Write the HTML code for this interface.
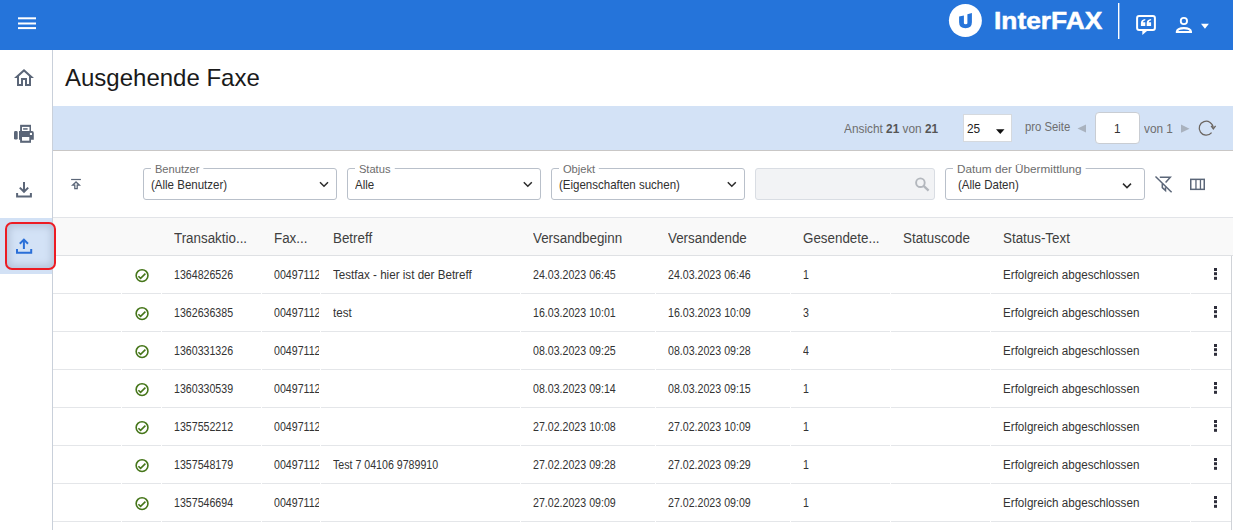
<!DOCTYPE html>
<html><head><meta charset="utf-8">
<style>
*{margin:0;padding:0;box-sizing:border-box}
html,body{width:1233px;height:530px;overflow:hidden;background:#fff;font-family:"Liberation Sans",sans-serif;color:#333}
.a{position:absolute}
.t{white-space:nowrap}
#hdr{left:0;top:0;width:1233px;height:50px;background:#2574da}
#side{left:0;top:50px;width:53px;height:480px;background:#fff;border-right:1px solid #c9d0da}
#act{left:0;top:218px;width:52px;height:56px;background:#d2e1f5}
#title{left:65px;top:62.6px;font-size:24px;line-height:30px;color:#1a1a1a}
#pag{left:53px;top:106px;width:1180px;height:45px;background:#d3e2f6;border-bottom:1px solid #c9c7c6}
.pg{font-size:13px;color:#6e6e6e;line-height:16px;transform-origin:0 50%;transform:scaleX(.91)}
.pg b{color:#555;font-weight:bold}
.sel{background:#fff;border:1px solid #d5d9de}
.inp{background:#fff;border:1px solid #c9cdd3;border-radius:4px}
.box{border:1px solid #b9c0ca;border-radius:3px;background:#fff}
.srch{border:1px solid #d9dde3;border-radius:3px;background:#f2f3f5}
.lbl{transform-origin:0 50%;transform:scaleX(.97);font-size:11.5px;color:#6d6d6d;background:#fff;padding:0 4px;line-height:12px}
.val{font-size:13px;color:#303030;line-height:16px;transform-origin:0 50%;transform:scaleX(.885)}
#filt{left:53px;top:151px;width:1180px;height:67px;background:#fff;border-bottom:1px solid #e2e4e8}
#th{left:53px;top:218px;width:1180px;height:38px;background:#f9f9f9;border-bottom:1px solid #dfe1e4}
.hc{font-size:14px;color:#404040;top:230.2px;line-height:16px;transform-origin:0 50%;transform:scaleX(.955)}
.row{left:53px;width:1179px;height:38px;border-bottom:1px solid #e4e6e9;background:#fff}
.c{font-size:12.5px;color:#333;line-height:16px;transform-origin:0 50%}
.dg{transform:scaleX(.85)}
.tx{transform:scaleX(.93)}
.clip{width:56px;overflow:hidden}
#ring{left:4.8px;top:222.2px;width:50.8px;height:48.2px;border:2.9px solid #ec1c24;border-radius:7px;background:#d3e2f6;box-shadow:inset 0 0 7px 3px #b6c5db}
#brand{left:994px;top:8.9px;font-size:24.5px;line-height:24.5px;font-weight:bold;color:#fff;letter-spacing:0px;transform-origin:0 50%;transform:scaleX(1.075);-webkit-text-stroke:0.5px #fff}

</style></head><body>
<div id="hdr" class="a"></div>
<div id="side" class="a"></div>
<div id="act" class="a"></div>
<div id="title" class="a t">Ausgehende Faxe</div>
<div id="pag" class="a"></div>
<div class="a t pg" style="left:844px;top:121px">Ansicht <b>21</b> von <b>21</b></div>
<div class="a sel" style="left:963px;top:114px;width:49px;height:28px"></div>
<div class="a t pg" style="left:967px;top:121px;color:#222">25</div>
<div class="a t pg" style="left:1025px;top:119px;transform:scaleX(.87)">pro Seite</div>
<div class="a inp" style="left:1095px;top:112px;width:45px;height:32px"></div>
<div class="a t pg" style="left:1114px;top:121px;color:#333">1</div>
<div class="a t pg" style="left:1144px;top:121px">von 1</div>
<div id="filt" class="a"></div>
<div class="a box" style="left:143px;top:168px;width:194px;height:32px"></div>
<div class="a t lbl" style="left:151px;top:162.7px">Benutzer</div>
<div class="a t val" style="left:151px;top:177px">(Alle Benutzer)</div>
<div class="a box" style="left:347px;top:168px;width:194px;height:32px"></div>
<div class="a t lbl" style="left:355px;top:162.7px">Status</div>
<div class="a t val" style="left:355px;top:177px">Alle</div>
<div class="a box" style="left:551px;top:168px;width:194px;height:32px"></div>
<div class="a t lbl" style="left:559px;top:162.7px">Objekt</div>
<div class="a t val" style="left:559px;top:177px">(Eigenschaften suchen)</div>
<div class="a srch" style="left:755px;top:168px;width:180px;height:32px"></div>
<div class="a box" style="left:945px;top:168px;width:200px;height:32px"></div>
<div class="a t lbl" style="left:953px;top:162.7px;transform:scaleX(1.02)">Datum der Übermittlung</div>
<div class="a t val" style="left:958px;top:177px">(Alle Daten)</div>
<div id="th" class="a"></div>
<div class="a t hc" style="left:174px">Transaktio...</div>
<div class="a t hc" style="left:274px">Fax...</div>
<div class="a t hc" style="left:333px">Betreff</div>
<div class="a t hc" style="left:533px">Versandbeginn</div>
<div class="a t hc" style="left:668px">Versandende</div>
<div class="a t hc" style="left:803px">Gesendete...</div>
<div class="a t hc" style="left:903px">Statuscode</div>
<div class="a t hc" style="left:1003px">Status-Text</div>
<div class="a row" style="top:256px"></div>
<div class="a t c dg" style="left:174px;top:267px">1364826526</div>
<div class="a t c dg clip" style="left:274px;top:267px;width:52.8px">00497112</div>
<div class="a t c tx" style="left:333px;top:267px">Testfax - hier ist der Betreff</div>
<div class="a t c dg" style="left:533px;top:267px">24.03.2023 06:45</div>
<div class="a t c dg" style="left:668px;top:267px">24.03.2023 06:46</div>
<div class="a t c dg" style="left:803px;top:267px">1</div>
<div class="a t c tx" style="left:1003px;top:267px">Erfolgreich abgeschlossen</div>
<div class="a row" style="top:294px"></div>
<div class="a t c dg" style="left:174px;top:305px">1362636385</div>
<div class="a t c dg clip" style="left:274px;top:305px;width:52.8px">00497112</div>
<div class="a t c tx" style="left:333px;top:305px">test</div>
<div class="a t c dg" style="left:533px;top:305px">16.03.2023 10:01</div>
<div class="a t c dg" style="left:668px;top:305px">16.03.2023 10:09</div>
<div class="a t c dg" style="left:803px;top:305px">3</div>
<div class="a t c tx" style="left:1003px;top:305px">Erfolgreich abgeschlossen</div>
<div class="a row" style="top:332px"></div>
<div class="a t c dg" style="left:174px;top:343px">1360331326</div>
<div class="a t c dg clip" style="left:274px;top:343px;width:52.8px">00497112</div>
<div class="a t c dg" style="left:533px;top:343px">08.03.2023 09:25</div>
<div class="a t c dg" style="left:668px;top:343px">08.03.2023 09:28</div>
<div class="a t c dg" style="left:803px;top:343px">4</div>
<div class="a t c tx" style="left:1003px;top:343px">Erfolgreich abgeschlossen</div>
<div class="a row" style="top:370px"></div>
<div class="a t c dg" style="left:174px;top:381px">1360330539</div>
<div class="a t c dg clip" style="left:274px;top:381px;width:52.8px">00497112</div>
<div class="a t c dg" style="left:533px;top:381px">08.03.2023 09:14</div>
<div class="a t c dg" style="left:668px;top:381px">08.03.2023 09:15</div>
<div class="a t c dg" style="left:803px;top:381px">1</div>
<div class="a t c tx" style="left:1003px;top:381px">Erfolgreich abgeschlossen</div>
<div class="a row" style="top:408px"></div>
<div class="a t c dg" style="left:174px;top:419px">1357552212</div>
<div class="a t c dg clip" style="left:274px;top:419px;width:52.8px">00497112</div>
<div class="a t c dg" style="left:533px;top:419px">27.02.2023 10:08</div>
<div class="a t c dg" style="left:668px;top:419px">27.02.2023 10:09</div>
<div class="a t c dg" style="left:803px;top:419px">1</div>
<div class="a t c tx" style="left:1003px;top:419px">Erfolgreich abgeschlossen</div>
<div class="a row" style="top:446px"></div>
<div class="a t c dg" style="left:174px;top:457px">1357548179</div>
<div class="a t c dg clip" style="left:274px;top:457px;width:52.8px">00497112</div>
<div class="a t c dg" style="left:333px;top:457px">Test 7 04106 9789910</div>
<div class="a t c dg" style="left:533px;top:457px">27.02.2023 09:28</div>
<div class="a t c dg" style="left:668px;top:457px">27.02.2023 09:29</div>
<div class="a t c dg" style="left:803px;top:457px">1</div>
<div class="a t c tx" style="left:1003px;top:457px">Erfolgreich abgeschlossen</div>
<div class="a row" style="top:484px"></div>
<div class="a t c dg" style="left:174px;top:495px">1357546694</div>
<div class="a t c dg clip" style="left:274px;top:495px;width:52.8px">00497112</div>
<div class="a t c dg" style="left:533px;top:495px">27.02.2023 09:09</div>
<div class="a t c dg" style="left:668px;top:495px">27.02.2023 09:09</div>
<div class="a t c dg" style="left:803px;top:495px">1</div>
<div class="a t c tx" style="left:1003px;top:495px">Erfolgreich abgeschlossen</div>
<div id="ring" class="a"></div>
<div class="a t" id="brand">InterFAX</div>
<div class="a" style="left:1231px;top:256px;width:1px;height:274px;background:#d0d3d8"></div>
<svg class="a" style="left:0;top:0" width="1233" height="530" viewBox="0 0 1233 530">
<g fill="#fff"><rect x="18" y="17.3" width="18" height="2"/><rect x="18" y="22.5" width="18" height="2"/><rect x="18" y="27.1" width="18" height="2"/></g>
<circle cx="965.4" cy="20.5" r="16.5" fill="#fff"/>
<path d="M959.1,16.6 L963.9,15.5 V23.2 Q963.9,24.3 965.65,24.3 Q967.4,24.3 967.4,23.2 V14.3 L971.9,13 V22.3 Q971.9,28.2 965.5,28.2 Q959.1,28.2 959.1,22.3 Z" fill="#2574da"/>
<rect x="1118" y="3" width="1.4" height="36" fill="#fff"/>
<rect x="1137.1" y="16" width="17.8" height="14" rx="2" fill="none" stroke="#fff" stroke-width="2"/>
<path d="M1142.3,29.5 V35 L1148.8,29.5 Z" fill="#fff"/>
<path d="M1140.9,26 H1145.3 V22.3 H1142.9 Q1143.1,20.6 1145.3,20.2 V19 Q1140.9,19.6 1140.9,23 Z" fill="#fff"/>
<path d="M1146.7,26 H1151.1 V22.3 H1148.7 Q1148.9,20.6 1151.1,20.2 V19 Q1146.7,19.6 1146.7,23 Z" fill="#fff"/>
<circle cx="1183.9" cy="21" r="3.15" fill="none" stroke="#fff" stroke-width="1.85"/>
<path d="M1175.8,33 V31.5 Q1176.5,26.9 1183.9,26.9 Q1191.3,26.9 1192,31.5 V33 Z M1178.3,31.1 H1189.6 Q1188.6,29.2 1183.9,29.2 Q1179.3,29.2 1178.3,31.1 Z" fill="#fff" fill-rule="evenodd"/>
<path d="M1201,23.8 H1208.9 L1204.95,28.75 Z" fill="#fff"/>
<path transform="translate(12,66)" d="M12 5.69l5 4.5V18h-2v-6H9v6H7v-7.81l5-4.5M12 3L2 12h3v8h6v-6h2v6h6v-8h3L12 3z" fill="#5b6678"/>
<g fill="#5b6678"><rect x="14" y="131" width="3.7" height="8.6" rx="1.4"/><path d="M19,131 H32 Q33.8,131 33.8,133 V139.8 H19 Z"/><rect x="20.1" y="124.8" width="10.9" height="6.4"/><rect x="20.1" y="137" width="10.9" height="5.8"/></g>
<g fill="#fff"><rect x="22" y="126.9" width="7.5" height="4.1"/><rect x="22" y="137" width="7.3" height="3.7"/><rect x="29.9" y="132.9" width="2.1" height="2.1"/></g>
<rect x="23.1" y="128.2" width="4.5" height="1.5" fill="#5b6678"/>
<g fill="none" stroke="#5b6678" stroke-width="2"><path d="M24,182 V192"/><path d="M19.8,187.6 L24,191.8 L28.2,187.6"/><path d="M17.1,193 V196.5 H30.9 V193"/></g>
<g fill="none" stroke="#2a6fd8" stroke-width="2"><path d="M23.9,239.5 V249"/><path d="M19.8,243.7 L23.9,239.6 L28,243.7"/><path d="M17,249 V252.7 H31.2 V249"/></g>
<path d="M1086,124.4 V132.6 L1077.5,128.5 Z" fill="#a9b2be"/>
<path d="M1181,124.6 V132.8 L1189.5,128.7 Z" fill="#a9b2be"/>
<path d="M1004.5,129.2 H996 L1000.25,134 Z" fill="#111"/>
<path d="M1213.2,127.8 A7,7 0 1 0 1211.6,132.7" fill="none" stroke="#6b6560" stroke-width="1.25"/>
<path d="M1211.1,125.9 L1213.3,128.9 L1215.6,125.9" fill="none" stroke="#6b6560" stroke-width="1.25"/>
<rect x="71.1" y="178.9" width="9.8" height="1.2" fill="#5b6678"/>
<path d="M76,182 L72.6,185.2 H74.8 V188.6 H77.2 V185.2 H79.4 Z" fill="none" stroke="#5b6678" stroke-width="1.3" stroke-linejoin="miter"/>
<path d="M320,182.3 L324,186.3 L328,182.3" fill="none" stroke="#2b2b2b" stroke-width="1.5"/>
<path d="M523.8,182.3 L527.8,186.3 L531.8,182.3" fill="none" stroke="#2b2b2b" stroke-width="1.5"/>
<path d="M727.8,182.3 L731.8,186.3 L735.8,182.3" fill="none" stroke="#2b2b2b" stroke-width="1.5"/>
<path d="M1123,183.60000000000002 L1127,187.60000000000002 L1131,183.60000000000002" fill="none" stroke="#2b2b2b" stroke-width="1.5"/>
<circle cx="920.4" cy="182.7" r="4.3" fill="none" stroke="#b3b7bd" stroke-width="1.9"/><path d="M923.6,185.9 L928.6,190.7" stroke="#b3b7bd" stroke-width="2.3"/>
<path d="M1155.5,176.5 L1171.6,192.2" stroke="#5b6678" stroke-width="1.5"/>
<path d="M1159.8,177.2 H1170.3 L1165.6,182.5" fill="none" stroke="#5b6678" stroke-width="1.5"/>
<path d="M1162.3,183.6 V187.6 L1165.5,190.6 V187.2" fill="none" stroke="#5b6678" stroke-width="1.5"/>
<rect x="1190.75" y="179.35" width="13.5" height="10" fill="none" stroke="#5b6678" stroke-width="1.5"/><rect x="1195.3" y="179" width="1.3" height="10.5" fill="#5b6678"/><rect x="1199.8" y="179" width="1.3" height="10.5" fill="#5b6678"/>
<circle cx="142.05" cy="275.6" r="5.9" fill="none" stroke="#46761a" stroke-width="1.6"/><path d="M138.4,276.2 L140.6,278.4 L145.4,273.6" fill="none" stroke="#46761a" stroke-width="1.6"/><g fill="#2d2d3a"><rect x="1214" y="268" width="3" height="3"/><rect x="1214" y="272.2" width="3" height="3"/><rect x="1214" y="276.8" width="3" height="3"/></g>
<circle cx="142.05" cy="313.6" r="5.9" fill="none" stroke="#46761a" stroke-width="1.6"/><path d="M138.4,314.2 L140.6,316.4 L145.4,311.6" fill="none" stroke="#46761a" stroke-width="1.6"/><g fill="#2d2d3a"><rect x="1214" y="306" width="3" height="3"/><rect x="1214" y="310.2" width="3" height="3"/><rect x="1214" y="314.8" width="3" height="3"/></g>
<circle cx="142.05" cy="351.6" r="5.9" fill="none" stroke="#46761a" stroke-width="1.6"/><path d="M138.4,352.2 L140.6,354.4 L145.4,349.6" fill="none" stroke="#46761a" stroke-width="1.6"/><g fill="#2d2d3a"><rect x="1214" y="344" width="3" height="3"/><rect x="1214" y="348.2" width="3" height="3"/><rect x="1214" y="352.8" width="3" height="3"/></g>
<circle cx="142.05" cy="389.6" r="5.9" fill="none" stroke="#46761a" stroke-width="1.6"/><path d="M138.4,390.2 L140.6,392.4 L145.4,387.6" fill="none" stroke="#46761a" stroke-width="1.6"/><g fill="#2d2d3a"><rect x="1214" y="382" width="3" height="3"/><rect x="1214" y="386.2" width="3" height="3"/><rect x="1214" y="390.8" width="3" height="3"/></g>
<circle cx="142.05" cy="427.6" r="5.9" fill="none" stroke="#46761a" stroke-width="1.6"/><path d="M138.4,428.2 L140.6,430.4 L145.4,425.6" fill="none" stroke="#46761a" stroke-width="1.6"/><g fill="#2d2d3a"><rect x="1214" y="420" width="3" height="3"/><rect x="1214" y="424.2" width="3" height="3"/><rect x="1214" y="428.8" width="3" height="3"/></g>
<circle cx="142.05" cy="465.6" r="5.9" fill="none" stroke="#46761a" stroke-width="1.6"/><path d="M138.4,466.2 L140.6,468.4 L145.4,463.6" fill="none" stroke="#46761a" stroke-width="1.6"/><g fill="#2d2d3a"><rect x="1214" y="458" width="3" height="3"/><rect x="1214" y="462.2" width="3" height="3"/><rect x="1214" y="466.8" width="3" height="3"/></g>
<circle cx="142.05" cy="503.6" r="5.9" fill="none" stroke="#46761a" stroke-width="1.6"/><path d="M138.4,504.2 L140.6,506.4 L145.4,501.6" fill="none" stroke="#46761a" stroke-width="1.6"/><g fill="#2d2d3a"><rect x="1214" y="496" width="3" height="3"/><rect x="1214" y="500.2" width="3" height="3"/><rect x="1214" y="504.8" width="3" height="3"/></g>
<g fill="#fff"><rect x="121" y="293" width="1" height="1"/><rect x="161" y="293" width="1" height="1"/><rect x="261" y="293" width="1" height="1"/><rect x="320" y="293" width="1" height="1"/><rect x="520" y="293" width="1" height="1"/><rect x="655" y="293" width="1" height="1"/><rect x="790" y="293" width="1" height="1"/><rect x="890" y="293" width="1" height="1"/><rect x="990" y="293" width="1" height="1"/><rect x="1190" y="293" width="1" height="1"/><rect x="121" y="331" width="1" height="1"/><rect x="161" y="331" width="1" height="1"/><rect x="261" y="331" width="1" height="1"/><rect x="320" y="331" width="1" height="1"/><rect x="520" y="331" width="1" height="1"/><rect x="655" y="331" width="1" height="1"/><rect x="790" y="331" width="1" height="1"/><rect x="890" y="331" width="1" height="1"/><rect x="990" y="331" width="1" height="1"/><rect x="1190" y="331" width="1" height="1"/><rect x="121" y="369" width="1" height="1"/><rect x="161" y="369" width="1" height="1"/><rect x="261" y="369" width="1" height="1"/><rect x="320" y="369" width="1" height="1"/><rect x="520" y="369" width="1" height="1"/><rect x="655" y="369" width="1" height="1"/><rect x="790" y="369" width="1" height="1"/><rect x="890" y="369" width="1" height="1"/><rect x="990" y="369" width="1" height="1"/><rect x="1190" y="369" width="1" height="1"/><rect x="121" y="407" width="1" height="1"/><rect x="161" y="407" width="1" height="1"/><rect x="261" y="407" width="1" height="1"/><rect x="320" y="407" width="1" height="1"/><rect x="520" y="407" width="1" height="1"/><rect x="655" y="407" width="1" height="1"/><rect x="790" y="407" width="1" height="1"/><rect x="890" y="407" width="1" height="1"/><rect x="990" y="407" width="1" height="1"/><rect x="1190" y="407" width="1" height="1"/><rect x="121" y="445" width="1" height="1"/><rect x="161" y="445" width="1" height="1"/><rect x="261" y="445" width="1" height="1"/><rect x="320" y="445" width="1" height="1"/><rect x="520" y="445" width="1" height="1"/><rect x="655" y="445" width="1" height="1"/><rect x="790" y="445" width="1" height="1"/><rect x="890" y="445" width="1" height="1"/><rect x="990" y="445" width="1" height="1"/><rect x="1190" y="445" width="1" height="1"/><rect x="121" y="483" width="1" height="1"/><rect x="161" y="483" width="1" height="1"/><rect x="261" y="483" width="1" height="1"/><rect x="320" y="483" width="1" height="1"/><rect x="520" y="483" width="1" height="1"/><rect x="655" y="483" width="1" height="1"/><rect x="790" y="483" width="1" height="1"/><rect x="890" y="483" width="1" height="1"/><rect x="990" y="483" width="1" height="1"/><rect x="1190" y="483" width="1" height="1"/><rect x="121" y="521" width="1" height="1"/><rect x="161" y="521" width="1" height="1"/><rect x="261" y="521" width="1" height="1"/><rect x="320" y="521" width="1" height="1"/><rect x="520" y="521" width="1" height="1"/><rect x="655" y="521" width="1" height="1"/><rect x="790" y="521" width="1" height="1"/><rect x="890" y="521" width="1" height="1"/><rect x="990" y="521" width="1" height="1"/><rect x="1190" y="521" width="1" height="1"/></g>
</svg>
</body></html>
